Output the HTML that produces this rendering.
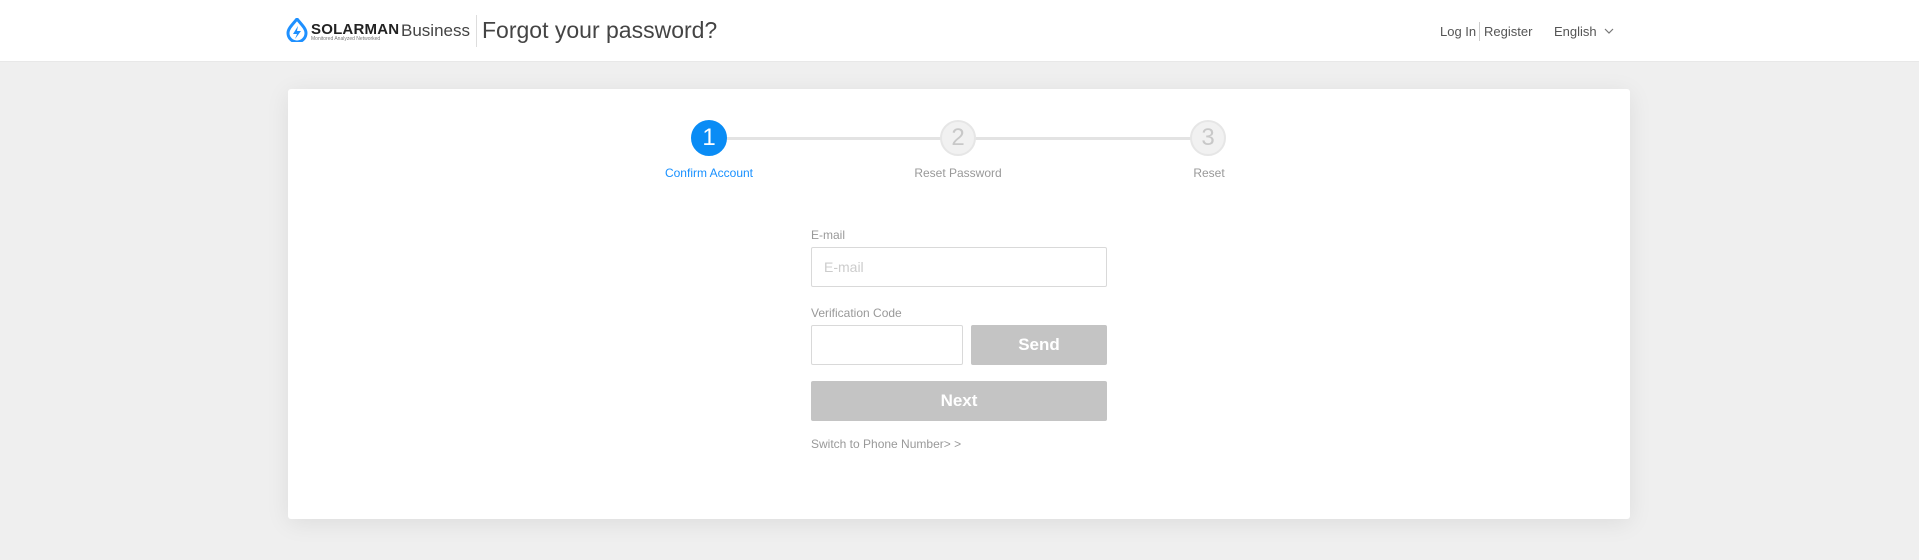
<!DOCTYPE html>
<html><head><style>
*{margin:0;padding:0;box-sizing:border-box}
body{width:1919px;height:560px;background:#efefef;font-family:"Liberation Sans","Noto Sans CJK SC",sans-serif;position:relative;overflow:hidden}
.hdr{position:absolute;left:0;top:0;width:1919px;height:62px;background:#fff;border-bottom:1px solid #e8e8e8}
.a{position:absolute;white-space:nowrap}
.card{position:absolute;left:288px;top:89px;width:1342px;height:430px;background:#fff;border-radius:3px;box-shadow:0 4px 24px rgba(0,0,0,.08)}
.circ{position:absolute;width:36px;height:36px;border-radius:50%;background:#f1f1f1;border:2px solid #e6e6e6;color:#c8c8c8;font-size:24px;text-align:center;line-height:32px}
.lbl{position:absolute;font-size:12px;color:#999;white-space:nowrap}
.cl{position:absolute;font-size:12px;color:#999;white-space:nowrap;width:200px;text-align:center}
.inp{position:absolute;border:1px solid #d9d9d9;border-radius:2px;background:#fff}
.btn{position:absolute;background:#c4c4c4;border-radius:2px;color:#fff;font-size:17px;font-weight:bold;text-align:center;line-height:40px}
</style></head><body>
<div class="hdr">
<svg class="a" style="left:286px;top:18px" width="22" height="24" viewBox="0 0 22 24"><path d="M11 1 C5 8 2 11 2 15 a9 9 0 0 0 18 0 C20 11 17 8 11 1Z" fill="none" stroke="#1e90ff" stroke-width="3"/><path d="M12 8 L7 16 H11 L9 21 L15 13 H11 Z" fill="#1e90ff"/></svg>
<div class="a" style="left:311px;top:21px;font-size:15px;font-weight:bold;color:#222;letter-spacing:0.2px">SOLARMAN</div>
<div class="a" style="left:311px;top:36px;font-size:5px;color:#777">Monitored Analyzed Networked</div>
<div class="a" style="left:401px;top:21px;font-size:17px;color:#444">Business</div>
<div class="a" style="left:476px;top:15px;width:1px;height:32px;background:#ddd"></div>
<div class="a" style="left:482px;top:17px;font-size:23px;color:#444">Forgot your password?</div>
<div class="a" style="left:1440px;top:24px;font-size:13px;color:#555">Log In</div>
<div class="a" style="left:1479px;top:22px;width:1px;height:19px;background:#ccc"></div>
<div class="a" style="left:1484px;top:24px;font-size:13px;color:#555">Register</div>
<div class="a" style="left:1554px;top:24px;font-size:13px;color:#555">English</div>
<svg class="a" style="left:1604px;top:28px" width="10" height="7" viewBox="0 0 10 7"><path d="M1 1 L5 5 L9 1" fill="none" stroke="#777" stroke-width="1.2"/></svg>
</div>
<div class="card"></div>
<div class="a" style="left:709px;top:137px;width:500px;height:3px;background:#e3e3e3"></div>
<div class="circ" style="left:691px;top:120px;background:#0a8cf5;border-color:#0a8cf5;color:#fff">1</div>
<div class="circ" style="left:940px;top:120px">2</div>
<div class="circ" style="left:1190px;top:120px">3</div>
<div class="cl" style="left:609px;top:166px;color:#1890ff">Confirm Account</div>
<div class="cl" style="left:858px;top:166px">Reset Password</div>
<div class="cl" style="left:1109px;top:166px">Reset</div>
<div class="lbl" style="left:811px;top:228px">E-mail</div>
<div class="inp" style="left:811px;top:247px;width:296px;height:40px"><span style="position:absolute;left:12px;top:11px;font-size:14px;color:#ccc">E-mail</span></div>
<div class="lbl" style="left:811px;top:306px">Verification Code</div>
<div class="inp" style="left:811px;top:325px;width:152px;height:40px"></div>
<div class="btn" style="left:971px;top:325px;width:136px;height:40px">Send</div>
<div class="btn" style="left:811px;top:381px;width:296px;height:40px">Next</div>
<div class="lbl" style="left:811px;top:437px">Switch to Phone Number&gt; &gt;</div>
</body></html>
